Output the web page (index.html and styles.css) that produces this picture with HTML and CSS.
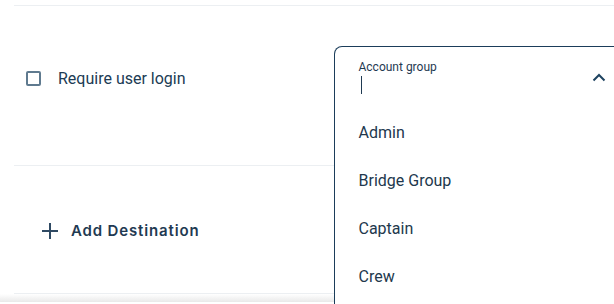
FILE: index.html
```html
<!DOCTYPE html>
<html>
<head>
<meta charset="utf-8">
<link rel="stylesheet" href="styles.css">
</head>
<body>
<div class="page">
  <div class="list">
    <div class="row edge"></div>
    <div class="row login">
      <span class="checkbox"></span>
      <span class="login-label">Require user login</span>
    </div>
    <div class="row add">
      <svg class="plus" width="18" height="18" viewBox="0 0 18 18"><path d="M9 1v16M1 9h16" stroke="#2f4a63" stroke-width="2" fill="none"/></svg>
      <span class="add-label">Add Destination</span>
    </div>
  </div>
  <div class="shade"></div>
  <div class="dropdown">
    <div class="dd-head">
      <div class="dd-field">
        <div class="dd-label">Account group</div>
        <div class="dd-cursor"></div>
      </div>
      <svg class="chev" width="14" height="9" viewBox="0 0 14 9"><path d="M1.5 7.5L7 2l5.5 5.5" stroke="#1e4360" stroke-width="2" fill="none"/></svg>
    </div>
    <div class="opt">Admin</div>
    <div class="opt">Bridge Group</div>
    <div class="opt">Captain</div>
    <div class="opt">Crew</div>
  </div>
</div>
</body>
</html>
```
FILE: styles.css
```css
html, body {
  margin: 0;
  padding: 0;
  background: #ffffff;
  overflow: hidden;
  width: 614px;
  height: 304px;
}
.page {
  position: relative;
  width: 614px;
  height: 304px;
  overflow: hidden;
  font-family: Roboto, "Liberation Sans", sans-serif;
  color: #1f3a52;
}
.list {
  margin-left: 14px;
}
.row {
  border-bottom: 1px solid #eceff2;
  display: flex;
  align-items: center;
}
.edge {
  height: 5px;
}
.login {
  height: 160px;
  padding-left: 12px;
  padding-bottom: 15px;
  box-sizing: border-box;
}
.checkbox {
  width: 15px;
  height: 15px;
  box-sizing: border-box;
  border: 2px solid #5f7a8f;
  border-radius: 2px;
  flex: none;
}
.login-label {
  margin-left: 17px;
  font-size: 16px;
  color: #203b54;
}
.add {
  height: 128px;
  padding-left: 27px;
  padding-top: 2px;
  box-sizing: border-box;
}
.plus {
  flex: none;
}
.add-label {
  margin-left: 12px;
  font-family: Inter, "Open Sans", sans-serif;
  font-weight: 600;
  font-size: 15px;
  letter-spacing: 0.85px;
  color: #1f3a52;
}
.shade {
  height: 8px;
  background: linear-gradient(#ffffff, #e9e9e9);
}
.dropdown {
  position: absolute;
  left: 334px;
  top: 46px;
  width: 300px;
  height: 258px;
  background: #ffffff;
  border: 1.5px solid #1b3d5a;
  border-bottom: none;
  border-top-left-radius: 8px;
  box-sizing: border-box;
}
.dd-head {
  height: 62px;
  display: flex;
  justify-content: space-between;
  padding-left: 23.5px;
  padding-right: 27px;
  box-sizing: border-box;
}
.dd-field {
  padding-top: 13px;
}
.dd-label {
  font-size: 12px;
  line-height: 14px;
  color: #1f3a52;
}
.dd-cursor {
  width: 1px;
  height: 18px;
  margin-top: 2px;
  margin-left: 2px;
  background: #1f3a52;
}
.chev {
  margin-top: 26px;
}
.opt {
  height: 48px;
  line-height: 48px;
  padding-left: 23.5px;
  font-size: 16px;
  color: #22384d;
}
```
